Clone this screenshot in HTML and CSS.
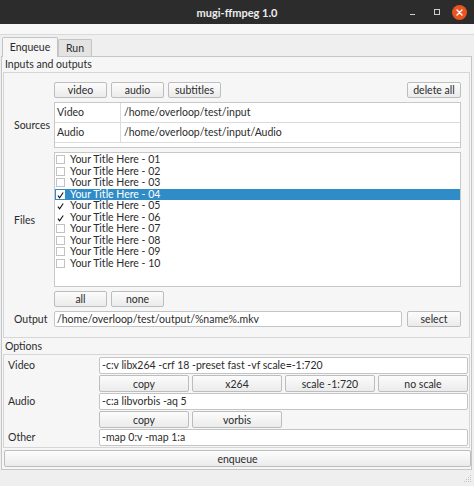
FILE: index.html
```html
<!DOCTYPE html>
<html lang="en">
<head>
  <meta charset="UTF-8" />
  <title>mugi-ffmpeg 1.0</title>
  <link rel="stylesheet" href="styles.css">
</head>
<body>
  <div class="titlebar">
    <div></div>
    <div class="title">mugi-ffmpeg 1.0</div>
    <div class="controls">
      <span class="ctl-min"></span>
      <span class="ctl-max"></span>
      <span class="ctl-close">
        <svg width="15" height="15" viewBox="0 0 15 15">
          <circle cx="7.5" cy="7.5" r="7.5" fill="#e95420"/>
          <path d="M5 5 L10 10 M10 5 L5 10" stroke="#fff" stroke-width="1.4" stroke-linecap="round"/>
        </svg>
      </span>
    </div>
  </div>
  <div class="menubar"></div>

  <div class="tabs">
    <div class="tab active">Enqueue</div>
    <div class="tab run">Run</div>
  </div>

  <div class="pane">
    <div class="group-title">Inputs and outputs</div>
    <div class="group io">
      <div></div>
      <div class="btn-row">
        <button class="btn small">video</button>
        <button class="btn small">audio</button>
        <button class="btn small">subtitles</button>
        <button class="btn small push">delete all</button>
      </div>

      <div class="label">Sources</div>
      <div class="sources">
        <div class="src-row"><div class="src-type">Video</div><div class="src-path">/home/overloop/test/input</div></div>
        <div class="src-row"><div class="src-type">Audio</div><div class="src-path">/home/overloop/test/input/Audio</div></div>
      </div>

      <div class="label">Files</div>
      <div class="files">
        <div class="file"><span class="check"></span>Your Title Here - 01</div>
        <div class="file"><span class="check"></span>Your Title Here - 02</div>
        <div class="file"><span class="check"></span>Your Title Here - 03</div>
        <div class="file selected"><span class="check on"><svg width="9" height="9" viewBox="0 0 9 9"><path d="M1.2 4.6 L3.4 7.6 L8 0.6" fill="none" stroke="#111" stroke-width="1.4"/></svg></span>Your Title Here - 04</div>
        <div class="file"><span class="check on"><svg width="9" height="9" viewBox="0 0 9 9"><path d="M1.2 4.6 L3.4 7.6 L8 0.6" fill="none" stroke="#111" stroke-width="1.4"/></svg></span>Your Title Here - 05</div>
        <div class="file"><span class="check on"><svg width="9" height="9" viewBox="0 0 9 9"><path d="M1.2 4.6 L3.4 7.6 L8 0.6" fill="none" stroke="#111" stroke-width="1.4"/></svg></span>Your Title Here - 06</div>
        <div class="file"><span class="check"></span>Your Title Here - 07</div>
        <div class="file"><span class="check"></span>Your Title Here - 08</div>
        <div class="file"><span class="check"></span>Your Title Here - 09</div>
        <div class="file"><span class="check"></span>Your Title Here - 10</div>
      </div>

      <div></div>
      <div class="btn-row">
        <button class="btn small">all</button>
        <button class="btn small">none</button>
      </div>

      <div class="label">Output</div>
      <div class="out-row">
        <div class="field">/home/overloop/test/output/%name%.mkv</div>
        <button class="btn select">select</button>
      </div>
    </div>

    <div class="group-title opt-title">Options</div>
    <div class="group options">
      <div class="opt-label">Video</div>
      <div class="field">-c:v libx264 -crf 18 -preset fast -vf scale=-1:720</div>
      <div></div>
      <div class="quad">
        <button class="btn">copy</button>
        <button class="btn">x264</button>
        <button class="btn">scale -1:720</button>
        <button class="btn">no scale</button>
      </div>
      <div class="opt-label">Audio</div>
      <div class="field">-c:a libvorbis -aq 5</div>
      <div></div>
      <div class="quad">
        <button class="btn">copy</button>
        <button class="btn">vorbis</button>
      </div>
      <div class="opt-label">Other</div>
      <div class="field">-map 0:v -map 1:a</div>
    </div>

    <button class="btn enqueue">enqueue</button>
  </div>

  <div class="statusbar">
    <svg width="8" height="8" viewBox="0 0 8 8">
      <g fill="#c4c4c4">
        <rect x="6" y="0" width="1" height="1"/>
        <rect x="4" y="2" width="1" height="1"/><rect x="6" y="2" width="1" height="1"/>
        <rect x="2" y="4" width="1" height="1"/><rect x="4" y="4" width="1" height="1"/><rect x="6" y="4" width="1" height="1"/>
        <rect x="0" y="6" width="1" height="1"/><rect x="2" y="6" width="1" height="1"/><rect x="4" y="6" width="1" height="1"/><rect x="6" y="6" width="1" height="1"/>
      </g>
    </svg>
  </div>
</body>
</html>
```

FILE: styles.css
```css
* {
    box-sizing: border-box;
}
body {
    margin: 0;
    width: 474px;
    height: 486px;
    overflow: hidden;
    background: #efefef;
    font-family: Lato, "Open Sans", sans-serif;
    font-size: 10.5px;
    color: #2b2b2b;
}

/* window chrome */
.titlebar {
    height: 24px;
    background: #2c2c2c;
    display: grid;
    grid-template-columns: 1fr auto 1fr;
    align-items: center;
}
.title {
    color: #ececec;
    font-weight: bold;
    font-size: 11px;
}
.controls {
    display: flex;
    justify-content: flex-end;
    align-items: center;
    padding-right: 7px;
}
.ctl-min {
    width: 5px;
    height: 1px;
    background: #cfcfcf;
    margin-top: 4px;
}
.ctl-max {
    width: 6px;
    height: 6px;
    border: 1px solid #cfcfcf;
    margin-left: 19px;
}
.ctl-close {
    display: flex;
    margin-left: 12px;
}
.menubar {
    height: 11px;
    background: #f7f7f7;
    border-bottom: 1px solid #dadada;
}

/* tabs */
.tabs {
    height: 21px;
    display: flex;
    align-items: flex-end;
    padding-left: 2px;
}
.tab {
    height: 17px;
    line-height: 16px;
    border: 1px solid #c4c4c4;
    border-bottom: none;
    border-radius: 2px 2px 0 0;
    background: #e3e3e3;
    text-align: center;
}
.tab.run {
    width: 34px;
}
.tab.active {
    height: 20px;
    line-height: 19px;
    margin-bottom: -1px;
    position: relative;
    z-index: 1;
    background: #f6f6f6;
    width: 56px;
}
.pane {
    margin-left: 1px;
    width: 471px;
    height: 414px;
    border: 1px solid #c6c6c6;
    background: #f6f6f6;
    display: flex;
    flex-direction: column;
}

/* groups */
.group-title {
    height: 15px;
    line-height: 15px;
    padding-left: 3px;
}
.opt-title {
    height: 16px;
    line-height: 16px;
}
.group {
    margin: 0 1px;
    border: 1px solid #d6d6d6;
}
.io {
    height: 266px;
    display: grid;
    grid-template-columns: 50px 1fr;
    grid-template-rows: 16px 46px 135px 16px 16px;
    row-gap: 4px;
    padding: 9px 8px 0 0;
}
.label {
    padding-left: 10px;
    align-self: center;
}
.btn-row {
    display: flex;
    gap: 4px;
}

/* controls */
.btn {
    font: inherit;
    color: #2b2b2b;
    border: 1px solid #bdbdbd;
    border-radius: 2px;
    background: linear-gradient(#fcfcfc, #ebebeb);
    padding: 0;
    height: 100%;
    line-height: 14px;
}
.btn.small {
    width: 53px;
}
.btn.push {
    margin-left: auto;
    width: 54px;
}
.field {
    height: 100%;
    background: #fff;
    border: 1px solid #c4c4c4;
    border-radius: 2px;
    padding-left: 2px;
    line-height: 15px;
    white-space: nowrap;
    overflow: hidden;
}

/* sources table */
.sources {
    background: #fff;
    border: 1px solid #c8c8c8;
}
.src-row {
    display: flex;
    height: 20px;
    line-height: 19px;
    border-bottom: 1px solid #dcdcdc;
}
.src-type {
    width: 66px;
    padding-left: 2px;
    border-right: 1px solid #dcdcdc;
}
.src-path {
    padding-left: 3px;
}

/* file list */
.files {
    background: #fff;
    border: 1px solid #c8c8c8;
    padding-top: 1px;
}
.file {
    height: 11.5px;
    line-height: 11.5px;
    display: flex;
    align-items: center;
    padding-left: 1px;
}
.file.selected {
    background: #308cc6;
    color: #fff;
}
.check {
    width: 9px;
    height: 9px;
    border: 1px solid #c2c2c2;
    background: #fff;
    margin-right: 5px;
    display: flex;
}
.check.on {
    border-color: #fff;
    background: transparent;
}
.file.selected .check.on {
    background: #fff;
}

.out-row {
    display: flex;
    gap: 5px;
}
.out-row .field {
    flex: 1;
}
.btn.select {
    width: 54px;
}

/* options */
.options {
    height: 94px;
    display: grid;
    grid-template-columns: 95px 1fr;
    grid-template-rows: repeat(5, 17px);
    row-gap: 1px;
    padding: 2px 1px 0 0;
}
.opt-label {
    padding-left: 4px;
    line-height: 17px;
}
.quad {
    display: grid;
    grid-template-columns: repeat(4, 1fr);
    gap: 3px;
}
.enqueue {
    height: 17px;
    margin: 2px 0 0 2px;
}

.statusbar {
    height: 16px;
    display: flex;
    justify-content: flex-end;
    align-items: flex-end;
    padding: 0 2px 3px 0;
}
```
